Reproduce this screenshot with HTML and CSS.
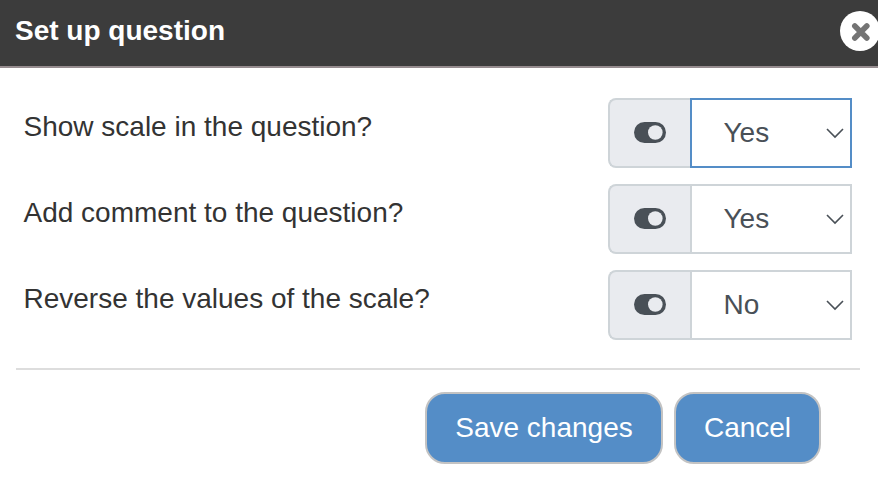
FILE: index.html
```html
<!DOCTYPE html>
<html lang="en">
<head>
<meta charset="utf-8">
<title>Set up question</title>
<link rel="stylesheet" href="styles.css">
</head>
<body>
<header class="bar">
<h1>Set up question</h1>
<button class="close" aria-label="Close"><svg width="40" height="40" viewBox="0 0 40 40"><path d="M14.800 15L26.800 27M26.800 15L14.800 27" stroke="#747474" stroke-width="5.600" stroke-linecap="round"/></svg></button>
</header>
<main class="rows">
<div class="row"><span class="label">Show scale in the question?</span><div class="group focus"><span class="addon"><svg width="32" height="22" viewBox="0 0 32 22"><rect y="1" width="32" height="21" rx="10.500" fill="#495057"/><circle cx="21.300" cy="11.500" r="7.300" fill="#e9ebef"/></svg></span><div class="select"><span>Yes</span><svg width="20" height="12" viewBox="0 0 20 12"><path d="M2 2L10 10L18 2" fill="none" stroke="#495057" stroke-width="1.600"/></svg></div></div></div>
<div class="row"><span class="label">Add comment to the question?</span><div class="group"><span class="addon"><svg width="32" height="22" viewBox="0 0 32 22"><rect y="1" width="32" height="21" rx="10.500" fill="#495057"/><circle cx="21.300" cy="11.500" r="7.300" fill="#e9ebef"/></svg></span><div class="select"><span>Yes</span><svg width="20" height="12" viewBox="0 0 20 12"><path d="M2 2L10 10L18 2" fill="none" stroke="#495057" stroke-width="1.600"/></svg></div></div></div>
<div class="row"><span class="label">Reverse the values of the scale?</span><div class="group"><span class="addon"><svg width="32" height="22" viewBox="0 0 32 22"><rect y="1" width="32" height="21" rx="10.500" fill="#495057"/><circle cx="21.300" cy="11.500" r="7.300" fill="#e9ebef"/></svg></span><div class="select"><span>No</span><svg width="20" height="12" viewBox="0 0 20 12"><path d="M2 2L10 10L18 2" fill="none" stroke="#495057" stroke-width="1.600"/></svg></div></div></div>
</main>
<footer class="actions"><button class="btn save">Save changes</button><button class="btn cancel">Cancel</button></footer>
</body>
</html>
```
FILE: styles.css
```css
* { box-sizing: border-box; }
body { margin: 0; height: 492px; overflow: hidden; background: #fff; color: #333; font-family: "Liberation Sans", Arial, sans-serif; font-size: 28px; }
svg { display: block; flex: none; }
.bar { display: flex; align-items: center; justify-content: space-between; height: 68px; padding: 0 0 4px 15px; background: #3c3c3c; border-bottom: 2px solid #968c8f; }
h1 { margin: 0; color: #fff; font-size: 28px; line-height: 32px; white-space: nowrap; }
.close { width: 40px; height: 40px; margin-right: -2px; padding: 0; border: 0; border-radius: 50%; background: #fff; }
.rows { display: flex; flex-direction: column; gap: 16px; margin: 0 18px 0 16px; padding: 30px 8px 28px 7.5px; border-bottom: 2px solid #ddd; }
.row { display: flex; justify-content: space-between; height: 70px; }
.label { padding-top: 13px; line-height: 32px; white-space: nowrap; }
.group { display: flex; width: 244px; height: 70px; }
.addon { display: flex; align-items: center; justify-content: center; width: 82px; padding-bottom: 2px; border: 2px solid #ced4d8; border-right: 0; border-radius: 8px 0 0 8px; background: #e9ebef; }
.select { display: flex; align-items: center; justify-content: space-between; width: 162px; padding: 0 5px 0 31.5px; border: 2px solid #ced4d8; color: #495057; }
.focus .select { border-color: #548dc7; }
.actions { display: flex; justify-content: flex-end; gap: 11px; padding: 22px 57px 0 0; }
.btn { height: 72px; padding: 0; border: 2px solid #c3c3c3; border-radius: 20px; background: #548dc7; color: #fff; font: inherit; white-space: nowrap; }
.save { width: 238px; }
.cancel { width: 147px; }
```
